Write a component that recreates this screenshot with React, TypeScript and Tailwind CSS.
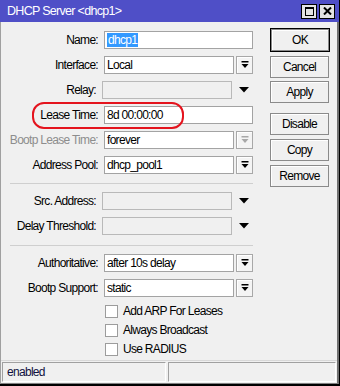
import React from "react";

const font = "font-['Liberation_Sans',Arial,sans-serif] tracking-[-0.7px]";

function DropIcon({ disabled }: { disabled?: boolean }) {
  const c = disabled ? "#a8a8a8" : "#000";
  return (
    <svg width="8" height="8" viewBox="0 0 8 8">
      <rect x="0.5" y="0" width="7" height="1.5" fill={c} />
      <polygon points="0.5,3 7.5,3 4,7" fill={c} />
    </svg>
  );
}

function Triangle() {
  return (
    <svg width="10" height="6" viewBox="0 0 10 6">
      <polygon points="0,0 10,0 5,5.5" fill="#000" />
    </svg>
  );
}

function Input({ value, disabled, wide, selected }: { value?: string; disabled?: boolean; wide?: boolean; selected?: boolean }) {
  return (
    <div
      className={`h-[18px] ${wide ? "w-[149px]" : "w-[130px]"} border ${
        disabled ? "bg-[#f0f0f0] border-[#b9b9b9]" : "bg-white border-[#a3a3a3]"
      } flex items-center pl-[2px] text-[12px] text-black leading-none`}
    >
      {selected ? <span className="bg-[#3399ff] text-white px-[1px] h-[14px] flex items-center">{value}</span> : value}
    </div>
  );
}

function DropBtn({ disabled }: { disabled?: boolean }) {
  return (
    <div className="ml-[2px] w-[17px] h-[18px] border border-[#a8a8a8] bg-[#f4f4f4] shadow-[inset_1px_1px_0_#fff] flex items-center justify-center">
      <DropIcon disabled={disabled} />
    </div>
  );
}

function Row({ label, gray, children }: { label: string; gray?: boolean; children: React.ReactNode }) {
  return (
    <div className="flex items-center h-[18px]">
      <div className={`w-[97px] text-right text-[12px] whitespace-nowrap ${gray ? "text-[#8d8d8d]" : "text-black"}`}>{label}</div>
      <div className="ml-[6px] flex items-center">{children}</div>
    </div>
  );
}

function Check({ label }: { label: string }) {
  return (
    <div className="flex items-center h-[14px] pl-[104px]">
      <div className="w-[13px] h-[13px] border border-[#9c9c9c] bg-white" />
      <span className="ml-[5px] text-[12px] text-black whitespace-nowrap">{label}</span>
    </div>
  );
}

function Btn({ label, def }: { label: string; def?: boolean }) {
  if (def) {
    return (
      <div className="w-[60px] h-[24px] border border-black p-0">
        <div className="w-full h-full border border-[#8a8a8a] bg-[#f0f0f0] shadow-[inset_1px_1px_0_#fff] flex items-center justify-center text-[12px] text-black">
          {label}
        </div>
      </div>
    );
  }
  return (
    <div className="w-[59px] h-[22px] border border-[#8a8a8a] bg-[#f0f0f0] shadow-[inset_1px_1px_0_#fff] flex items-center justify-center text-[12px] text-black">
      {label}
    </div>
  );
}

export default function App() {
  return (
    <div className={`w-[340px] h-[386px] bg-[#f0f0f0] border-r border-b-2 border-black flex flex-col ${font}`}>
      <div className="h-[22px] bg-[#4f4fc7] flex items-center pl-[7px] pr-[4px] shrink-0">
        <span className="text-white text-[12.5px] whitespace-nowrap">DHCP Server &lt;dhcp1&gt;</span>
        <div className="ml-auto flex gap-[2px]">
          <div className="w-[16px] h-[15px] bg-[#e4e4e4] border border-black flex items-center justify-center">
            <div className="w-[9px] h-[9px] border border-black border-t-2" />
          </div>
          <div className="w-[16px] h-[15px] bg-[#e4e4e4] border border-black flex items-center justify-center">
            <svg width="9" height="8" viewBox="0 0 9 8">
              <path d="M1 0.5 L8 7.5 M8 0.5 L1 7.5" stroke="#000" strokeWidth="2" />
            </svg>
          </div>
        </div>
      </div>

      <div className="flex-1 flex flex-col border-l border-[#a0a0a0] border-r-2 border-r-[#707070] border-b border-b-[#808080]">
        <div className="relative flex-1 flex">
          <div className="w-[252px] flex flex-col gap-[7px] pt-[9px]">
            <Row label="Name:">
              <Input value="dhcp1" wide selected />
            </Row>
            <Row label="Interface:">
              <Input value="Local" />
              <DropBtn />
            </Row>
            <Row label="Relay:">
              <Input disabled />
              <div className="w-[19px] flex justify-center ml-[2px]">
                <Triangle />
              </div>
            </Row>
            <Row label="Lease Time:">
              <Input value="8d 00:00:00" wide />
            </Row>
            <Row label="Bootp Lease Time:" gray>
              <Input value="forever" />
              <DropBtn disabled />
            </Row>
            <Row label="Address Pool:">
              <Input value="dhcp_pool1" />
              <DropBtn />
            </Row>
            <div className="h-[4px] pl-[9px] flex items-center">
              <div className="w-full h-px bg-[#cfcfcf]" />
            </div>
            <Row label="Src. Address:">
              <Input disabled />
              <div className="w-[19px] flex justify-center ml-[2px]">
                <Triangle />
              </div>
            </Row>
            <Row label="Delay Threshold:">
              <Input disabled />
              <div className="w-[19px] flex justify-center ml-[2px]">
                <Triangle />
              </div>
            </Row>
            <div className="h-[5px] pl-[9px] pt-[3px]">
              <div className="w-full h-px bg-[#cfcfcf]" />
            </div>
            <Row label="Authoritative:">
              <Input value="after 10s delay" />
              <DropBtn />
            </Row>
            <Row label="Bootp Support:">
              <Input value="static" />
              <DropBtn />
            </Row>
            <div className="flex flex-col gap-[5px]">
              <Check label="Add ARP For Leases" />
              <Check label="Always Broadcast" />
              <Check label="Use RADIUS" />
            </div>
          </div>

          <div className="ml-[17px] flex flex-col pt-[6px]">
            <Btn label="OK" def />
            <div className="mt-[4px] flex flex-col gap-[3px]">
              <Btn label="Cancel" />
              <Btn label="Apply" />
            </div>
            <div className="mt-[10px] flex flex-col gap-[4px]">
              <Btn label="Disable" />
              <Btn label="Copy" />
              <Btn label="Remove" />
            </div>
          </div>

          <svg className="absolute left-[31px] top-[80px]" width="152" height="27" viewBox="0 0 152 27">
            <rect x="1" y="1" width="150" height="25" rx="11" ry="11" fill="none" stroke="#e4141e" strokeWidth="2" />
          </svg>
        </div>

        <div className="h-[23px] flex gap-[2px] px-[1px] pt-[1px] pb-[1px] border-t border-[#d8d8d8]">
          <div className="w-[164px] h-full border border-[#a0a0a0] border-r-white border-b-white flex items-center pl-[4px] text-[12px] text-[#101040]">
            enabled
          </div>
          <div className="flex-1 h-full border border-[#a0a0a0] border-r-white border-b-white" />
        </div>
      </div>
    </div>
  );
}
